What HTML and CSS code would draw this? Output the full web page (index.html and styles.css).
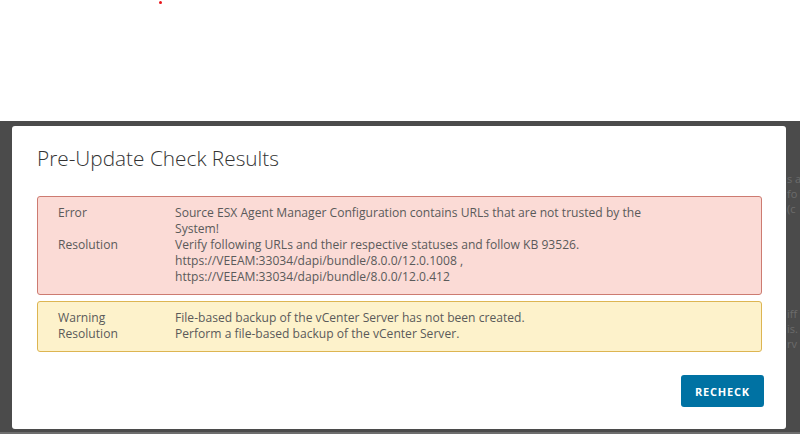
FILE: index.html
```html
<!DOCTYPE html>
<html>
<head>
<meta charset="utf-8">
<link rel="stylesheet" href="styles.css">
</head>
<body>
<div class="top">
  <span class="red-dot"></span>
</div>
<div class="backdrop">
  <div class="modal">
    <h3 class="modal-title">Pre-Update Check Results</h3>
    <div class="alert alert-danger">
      <div class="row">
        <div class="label">Error</div>
        <div class="value">Source ESX Agent Manager Configuration contains URLs that are not trusted by the<br>System!</div>
      </div>
      <div class="row">
        <div class="label">Resolution</div>
        <div class="value">Verify following URLs and their respective statuses and follow KB 93526.<br>https://VEEAM:33034/dapi/bundle/8.0.0/12.0.1008 ,<br>https://VEEAM:33034/dapi/bundle/8.0.0/12.0.412</div>
      </div>
    </div>
    <div class="alert alert-warning">
      <div class="row">
        <div class="label">Warning</div>
        <div class="value">File-based backup of the vCenter Server has not been created.</div>
      </div>
      <div class="row">
        <div class="label">Resolution</div>
        <div class="value">Perform a file-based backup of the vCenter Server.</div>
      </div>
    </div>
    <div class="footer">
      <button class="btn">RECHECK</button>
    </div>
  </div>
  <div class="behind">
    <p class="behind-group first">s a<br>fo<br>(c</p>
    <p class="behind-group second">iff<br>is.<br>rv</p>
  </div>
</div>
</body>
</html>
```

FILE: styles.css
```css
* { box-sizing: border-box; }
html, body { margin: 0; padding: 0; }
body {
  width: 800px;
  height: 434px;
  overflow: hidden;
  background: #ffffff;
  font-family: "Open Sans", "Lato", sans-serif;
}
.top {
  height: 121px;
  position: relative;
  background: #ffffff;
}
.red-dot {
  position: absolute;
  left: 159px;
  top: 1px;
  width: 3px;
  height: 3px;
  border-radius: 50%;
  background: #e8141a;
}
.backdrop {
  height: 313px;
  background: #4b4b4b;
  display: flex;
  align-items: flex-start;
  padding: 5px 0 0 12px;
  border-bottom: 2px solid #6e6e6e;
}
.modal {
  width: 774px;
  height: 303px;
  flex: none;
  background: #ffffff;
  border-radius: 3px;
  padding: 20px 22px 22px 25px;
  display: flex;
  flex-direction: column;
}
.modal-title {
  margin: 0;
  font-weight: 300;
  font-size: 20.8px;
  line-height: 24px;
  color: #333333;
  height: 50px;
}
.alert {
  width: 725px;
  border: 1px solid;
  border-radius: 3px;
  padding: 8px 0 9px 20px;
  font-size: 12.1px;
  line-height: 16px;
  color: #5a5a5a;
}
.alert-danger {
  background: #fbdbd6;
  border-color: #cd7b71;
}
.alert-warning {
  margin-top: 6px;
  background: #fdf2cb;
  border-color: #ddb552;
}
.row {
  display: flex;
}
.label {
  width: 117px;
  flex: none;
}
.value {
  flex: 1;
}
.footer {
  margin-top: auto;
  display: flex;
  justify-content: flex-end;
}
.btn {
  width: 83px;
  height: 32px;
  border: none;
  border-radius: 3px;
  background: #0072a3;
  color: #ffffff;
  font-family: "Open Sans", "Lato", sans-serif;
  font-weight: 700;
  font-size: 11px;
  letter-spacing: 0.8px;
  padding: 0;
}
.behind {
  flex: 1;
  overflow: hidden;
  color: #6c6c6c;
  font-size: 11px;
  line-height: 15px;
  white-space: nowrap;
  padding-left: 1px;
}
.behind-group {
  margin: 0;
}
.behind-group.first {
  margin-top: 45px;
}
.behind-group.second {
  margin-top: 90px;
}
```
